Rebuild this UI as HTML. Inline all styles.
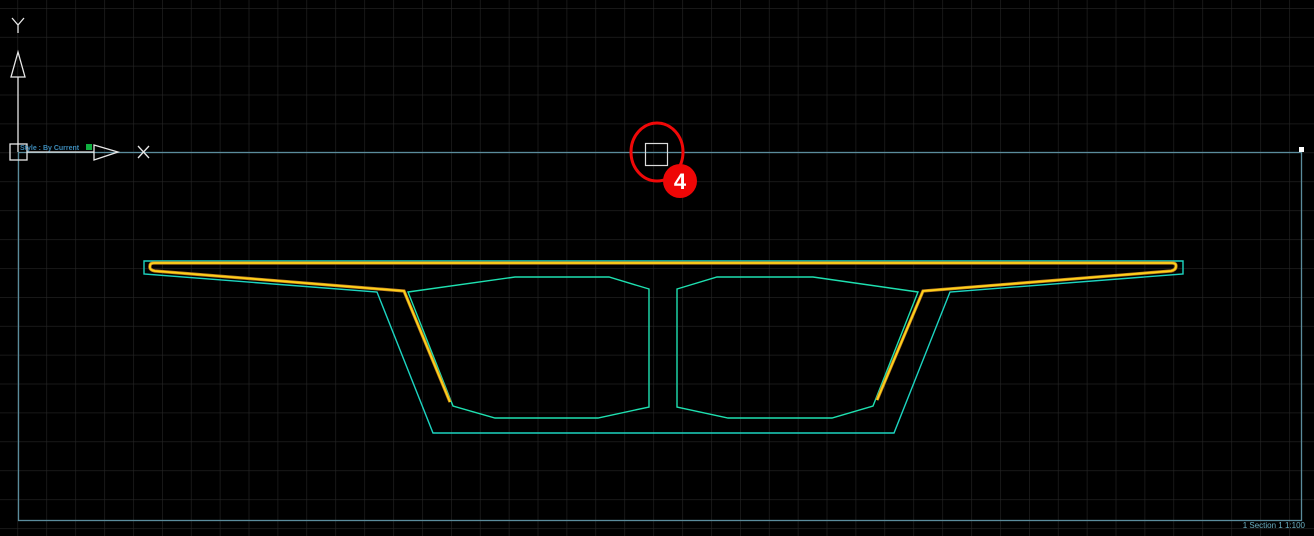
<!DOCTYPE html>
<html><head><meta charset="utf-8"><style>
html,body{margin:0;padding:0;background:#000;overflow:hidden}
svg{display:block}
</style></head><body>
<svg width="1314" height="536" viewBox="0 0 1314 536" xmlns="http://www.w3.org/2000/svg">
<defs>
<pattern id="g" x="17.5" y="8" width="28.9" height="28.9" patternUnits="userSpaceOnUse">
<path d="M0 0H28.9M0 0V28.9" stroke="#262626" stroke-width="1.2" fill="none"/>
</pattern>
</defs>
<rect width="1314" height="536" fill="#000"/>
<rect width="1314" height="536" fill="url(#g)"/>
<!-- border -->
<rect x="18.5" y="152.5" width="1283" height="368" fill="none" stroke="#5a8c9c" stroke-width="1.3"/>
<rect x="1299" y="147" width="5" height="5" fill="#fff"/>
<text x="1305" y="528" font-family="Liberation Sans, sans-serif" font-size="8" fill="#6aaec0" text-anchor="end">1 Section 1 1:100</text>
<!-- section outer -->
<g fill="none" stroke="#1ee0b0" stroke-width="1.4">
<path d="M144 261H1183V274L950 292L894 433H433L377 292L144 274Z" stroke="#1cd4c0"/>
<path d="M408 292L515 277H609L649 289V407L598 418H495L453 406Z"/>
<path d="M677 289L717 277H813L918 292L873 406L832 418H728L677 407Z"/>
</g>
<!-- yellow strand -->
<path d="M450 402L404 291L155 271Q149 270 150 266Q150 263 154 263H1172Q1176 263 1176 266Q1176 270 1171 271L923 291L877 400" fill="none" stroke="#c08020" stroke-width="3.2"/>
<path d="M450 402L404 291L155 271Q149 270 150 266Q150 263 154 263H1172Q1176 263 1176 266Q1176 270 1171 271L923 291L877 400" fill="none" stroke="#ffd21a" stroke-width="1.8"/>
<!-- UCS icon -->
<g stroke="#e8e8e8" stroke-width="1.3" fill="none">
<path d="M12 18L18 25L24 18M18 25V33"/>
<path d="M18 77V152"/>
<path d="M18 52L11 77H25Z"/>
<rect x="10" y="144" width="17" height="16"/>
<path d="M27 152H94"/>
<path d="M94 145V160L118 152Z"/>
<path d="M138 146L149 158M149 146L138 158"/>
</g>
<text x="20" y="150" font-family="Liberation Sans, sans-serif" font-size="7" font-weight="bold" fill="#3c8ab8">Style : By Current</text>
<rect x="86" y="144" width="6" height="6" fill="#10b040"/>
<!-- marker -->
<rect x="645.5" y="143.5" width="22" height="22" fill="none" stroke="#dcdcdc" stroke-width="1.2"/>
<ellipse cx="657" cy="152" rx="26" ry="29" fill="none" stroke="#f00808" stroke-width="3"/>
<circle cx="680" cy="181" r="17" fill="#ee0606"/>
<text x="680" y="189" font-family="Liberation Sans, sans-serif" font-size="22" font-weight="bold" fill="#fff" text-anchor="middle">4</text>
</svg>
</body></html>
